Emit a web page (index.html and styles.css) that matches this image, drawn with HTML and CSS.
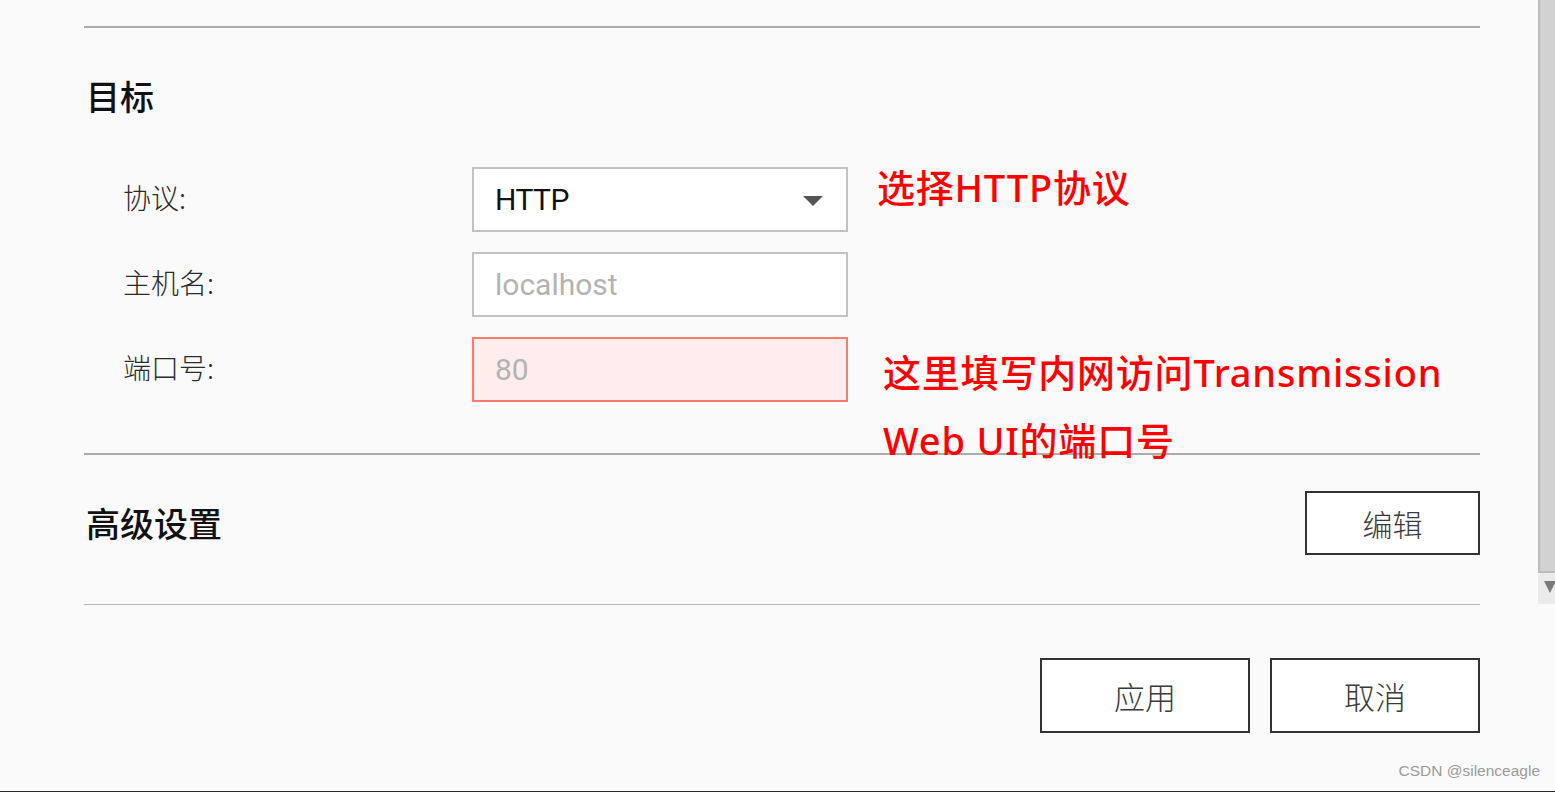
FILE: index.html
```html
<!DOCTYPE html>
<html lang="zh-CN">
<head>
<meta charset="utf-8">
<title>目标设置</title>
<link rel="stylesheet" href="styles.css">
</head>
<body>
<div class="page">
  <main class="content">
    <div class="rule rule-top"></div>

    <section class="target">
      <h2 class="heading">目标</h2>
      <div class="form">
        <div class="row">
          <label class="label">协议:</label>
          <div class="field select">
            <span class="value">HTTP</span>
            <span class="caret"></span>
          </div>
        </div>
        <div class="row">
          <label class="label">主机名:</label>
          <div class="field"><span class="placeholder">localhost</span></div>
        </div>
        <div class="row">
          <label class="label">端口号:</label>
          <div class="field error"><span class="placeholder">80</span></div>
        </div>
      </div>
    </section>

    <div class="rule rule-mid"></div>

    <section class="advanced">
      <h2 class="heading">高级设置</h2>
      <button class="btn btn-edit">编辑</button>
    </section>

    <div class="rule rule-bottom"></div>

    <footer class="actions">
      <button class="btn btn-action">应用</button>
      <button class="btn btn-action">取消</button>
    </footer>

    <div class="note note-protocol">选择HTTP协议</div>
    <div class="note note-port">这里填写内网访问Transmission<br>Web UI的端口号</div>
  </main>

  <aside class="scrollbar">
    <div class="track"></div>
    <div class="arrow"><span class="arrow-tri"></span></div>
  </aside>

  <div class="watermark">CSDN @silenceagle</div>
</div>
</body>
</html>
```

FILE: styles.css
```css
* { box-sizing: border-box; }

html, body {
  margin: 0;
  padding: 0;
}

body {
  background: #fafafa;
  width: 1555px;
  height: 792px;
  overflow: hidden;
  font-family: "Noto Sans CJK SC", "Noto Sans", sans-serif;
  color: #222;
}

.page {
  position: relative;
  display: flex;
  height: 792px;
  border-bottom: 1px solid #2a2a2a;
}

.content {
  position: relative;
  width: 1538px;
  padding-left: 84px;
  padding-right: 58px;
}

.rule {
  background: #ababab;
  height: 2px;
}

.rule-top { margin-top: 26px; }
.rule-mid { margin-top: 51px; }
.rule-bottom { height: 1px; background: #b5b5b5; }

.heading {
  margin: 0;
  font-size: 34px;
  line-height: 34px;
  font-weight: 500;
  color: #111;
  padding-left: 2px;
}

.target {
  padding-top: 51px;
}

.form {
  margin-top: 54px;
  display: flex;
  flex-direction: column;
  gap: 20px;
}

.row {
  display: flex;
  align-items: center;
  height: 65px;
}

.label {
  width: 388px;
  padding-left: 39px;
  margin-bottom: 6px;
  font-size: 28px;
  font-weight: 300;
  color: #2a2a2a;
}

.field {
  width: 376px;
  height: 65px;
  background: #fff;
  border: 2px solid #c2c2c2;
  display: flex;
  align-items: center;
  justify-content: space-between;
  padding: 0 23px 0 21px;
  font-family: Roboto, "Noto Sans", sans-serif;
  font-size: 30px;
}

.field .value {
  color: #111;
  letter-spacing: -0.5px;
}

.field .placeholder {
  color: #b3b3b3;
}

.field.error {
  background: #ffeded;
  border-color: #fb7a6f;
}

.caret {
  width: 0;
  height: 0;
  border-left: 10px solid transparent;
  border-right: 10px solid transparent;
  border-top: 10px solid #555;
  margin-top: 2px;
}

.advanced {
  display: flex;
  align-items: center;
  justify-content: space-between;
  padding-top: 36px;
  padding-bottom: 49px;
}

.btn {
  background: #fff;
  border: 2px solid #333;
  border-radius: 0;
  font-family: "Noto Sans CJK SC", sans-serif;
  font-weight: 300;
  color: #3a3a3a;
  padding: 0;
  cursor: pointer;
}

.btn-edit {
  width: 175px;
  height: 64px;
  font-size: 30px;
}

.actions {
  display: flex;
  justify-content: flex-end;
  gap: 20px;
  margin-top: 53px;
}

.btn-action {
  width: 210px;
  height: 75px;
  font-size: 31px;
}

.note {
  position: absolute;
  color: #f00;
  font-family: "Noto Sans", "Noto Sans CJK SC", sans-serif;
  font-size: 38px;
  line-height: 68px;
  white-space: nowrap;
  font-weight: 500;
}

.note-protocol {
  left: 877px;
  top: 153px;
  letter-spacing: 0.8px;
}

.note-port {
  left: 883px;
  top: 338px;
  letter-spacing: 0.8px;
}

.scrollbar {
  width: 17px;
  height: 604px;
  display: flex;
  flex-direction: column;
}

.track {
  flex: 1;
  background: #d2d2d2;
  border-left: 2px solid #bcbcbc;
  border-bottom: 2px solid #bcbcbc;
}

.arrow {
  height: 31px;
  background: #ebebeb;
  display: flex;
  justify-content: flex-end;
  padding-top: 8px;
}

.arrow-tri {
  width: 0;
  height: 0;
  border-left: 6px solid transparent;
  border-right: 6px solid transparent;
  border-top: 12px solid #7a7a7a;
  margin-right: -1px;
}

.watermark {
  position: absolute;
  right: 15px;
  top: 762px;
  font-family: "Liberation Sans", Arial, sans-serif;
  font-size: 15.5px;
  color: #9a9a9a;
}
```
